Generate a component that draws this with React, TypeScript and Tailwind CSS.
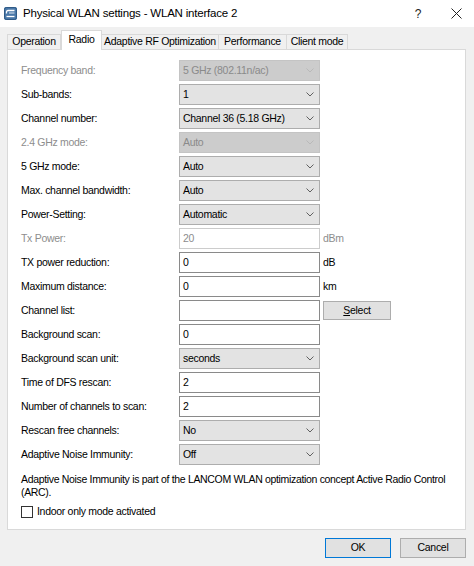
import React from "react";

const Chevron = ({ disabled }: { disabled?: boolean }) => (
  <svg width="8" height="5" viewBox="0 0 8 5" className="mr-[5px] shrink-0">
    <path d="M0.5 0.5 L4 4 L7.5 0.5" fill="none" stroke={disabled ? "#b9b9b9" : "#606060"} strokeWidth="1" />
  </svg>
);

type Row =
  | { kind: "select"; label: string; value: string; disabled?: boolean }
  | { kind: "input"; label: string; value: string; disabled?: boolean; unit?: string; button?: boolean };

const rows: Row[] = [
  { kind: "select", label: "Frequency band:", value: "5 GHz (802.11n/ac)", disabled: true },
  { kind: "select", label: "Sub-bands:", value: "1" },
  { kind: "select", label: "Channel number:", value: "Channel 36 (5.18 GHz)" },
  { kind: "select", label: "2.4 GHz mode:", value: "Auto", disabled: true },
  { kind: "select", label: "5 GHz mode:", value: "Auto" },
  { kind: "select", label: "Max. channel bandwidth:", value: "Auto" },
  { kind: "select", label: "Power-Setting:", value: "Automatic" },
  { kind: "input", label: "Tx Power:", value: "20", disabled: true, unit: "dBm" },
  { kind: "input", label: "TX power reduction:", value: "0", unit: "dB" },
  { kind: "input", label: "Maximum distance:", value: "0", unit: "km" },
  { kind: "input", label: "Channel list:", value: "", button: true },
  { kind: "input", label: "Background scan:", value: "0" },
  { kind: "select", label: "Background scan unit:", value: "seconds" },
  { kind: "input", label: "Time of DFS rescan:", value: "2" },
  { kind: "input", label: "Number of channels to scan:", value: "2" },
  { kind: "select", label: "Rescan free channels:", value: "No" },
  { kind: "select", label: "Adaptive Noise Immunity:", value: "Off" },
];

export default function App() {
  return (
    <div className="w-[474px] h-[566px] bg-[#f0f0f0] flex flex-col font-['Liberation_Sans',Arial,sans-serif] text-[10.5px] text-black tracking-[-0.3px] overflow-hidden">
      {/* Title bar */}
      <div className="h-[27px] bg-white flex items-center shrink-0">
        <svg width="13" height="13" viewBox="0 0 13 13" className="ml-[4px]">
          <rect x="0" y="0" width="13" height="13" rx="2" fill="#4a78a8" />
          <rect x="0.5" y="0.5" width="12" height="12" rx="2" fill="none" stroke="#2f5a86" />
          <path d="M10.5 3.5 H4 Q2.5 3.5 2.5 5 V6.5" fill="none" stroke="#ffffff" strokeWidth="1.3" />
          <path d="M10.5 6 H5 " fill="none" stroke="#dfe8f2" strokeWidth="1" />
          <path d="M2.5 9.5 H10.5" fill="none" stroke="#ffffff" strokeWidth="1.3" />
        </svg>
        <span className="ml-[6px] text-[11.5px] tracking-[-0.2px] text-black whitespace-nowrap">Physical WLAN settings - WLAN interface 2</span>
        <span className="ml-auto mr-[30px] text-[12px] text-[#222]">?</span>
        <svg width="11" height="11" viewBox="0 0 11 11" className="mr-[12px]">
          <path d="M0.5 0.5 L10.5 10.5 M10.5 0.5 L0.5 10.5" stroke="#222" strokeWidth="1" />
        </svg>
      </div>

      {/* Tabs */}
      <div className="h-[22px] flex items-end pl-[7px] shrink-0 whitespace-nowrap">
        <div className="h-[15px] w-[54px] border border-b-0 border-[#d9d9d9] bg-[#f0f0f0] flex items-center justify-center">Operation</div>
        <div className="relative z-10 h-[20px] -mb-px w-[41px] border border-b-0 border-[#d9d9d9] bg-white flex items-center justify-center pb-[2px]">Radio</div>
        <div className="h-[15px] w-[117px] border border-b-0 border-l-0 border-[#d9d9d9] bg-[#f0f0f0] flex items-center justify-center">Adaptive RF Optimization</div>
        <div className="h-[15px] w-[68px] border border-b-0 border-l-0 border-[#d9d9d9] bg-[#f0f0f0] flex items-center justify-center">Performance</div>
        <div className="h-[15px] w-[61px] border border-b-0 border-l-0 border-[#d9d9d9] bg-[#f0f0f0] flex items-center justify-center">Client mode</div>
      </div>

      {/* Panel */}
      <div className="ml-[7px] w-[459px] h-[481px] bg-white border border-[#d9d9d9] pt-[10px] pl-[13px] pr-[10px] flex flex-col shrink-0">
        <div className="flex flex-col gap-[3px]">
          {rows.map((r, i) => (
            <div key={i} className="flex items-center h-[21px]">
              <div className={`w-[158px] shrink-0 whitespace-nowrap ${r.disabled ? "text-[#8d8d8d]" : "text-black"}`}>{r.label}</div>
              {r.kind === "select" ? (
                <div
                  className={`w-[141px] h-[21px] border flex items-center justify-between pl-[3px] ${
                    r.disabled ? "bg-[#cccccc] border-[#c4c4c4] text-[#8a8a8a]" : "bg-[#e3e3e3] border-[#adadad] text-black"
                  }`}
                >
                  <span>{r.value}</span>
                  <Chevron disabled={r.disabled} />
                </div>
              ) : (
                <div
                  className={`w-[141px] h-[21px] border flex items-center pl-[3px] bg-white ${
                    r.disabled ? "border-[#cccccc] text-[#8d8d8d]" : "border-[#8a8a8a] text-black"
                  }`}
                >
                  {r.value}
                </div>
              )}
              {r.kind === "input" && r.unit && (
                <span className={`ml-[3px] ${r.disabled ? "text-[#8d8d8d]" : "text-black"}`}>{r.unit}</span>
              )}
              {r.kind === "input" && r.button && (
                <div className="ml-[3px] w-[68px] h-[19px] border border-[#adadad] bg-[#e1e1e1] flex items-center justify-center">
                  <span>
                    <span className="underline">S</span>elect
                  </span>
                </div>
              )}
            </div>
          ))}
        </div>
        <div className="mt-[8px] leading-[13px] tracking-[-0.33px]">
          Adaptive Noise Immunity is part of the LANCOM WLAN optimization concept Active Radio Control (ARC).
        </div>
        <div className="mt-[6px] flex items-center h-[13px]">
          <div className="w-[12px] h-[12px] border border-[#333333] bg-white shrink-0" />
          <span className="ml-[4px]">Indoor only mode activated</span>
        </div>
      </div>

      {/* Buttons */}
      <div className="flex justify-end gap-[9px] pr-[8px] mt-[8px]">
        <div className="w-[66px] h-[20px] border border-[#0078d7] bg-[#e1e1e1] flex items-center justify-center">OK</div>
        <div className="w-[66px] h-[20px] border border-[#adadad] bg-[#e1e1e1] flex items-center justify-center">Cancel</div>
      </div>
    </div>
  );
}
